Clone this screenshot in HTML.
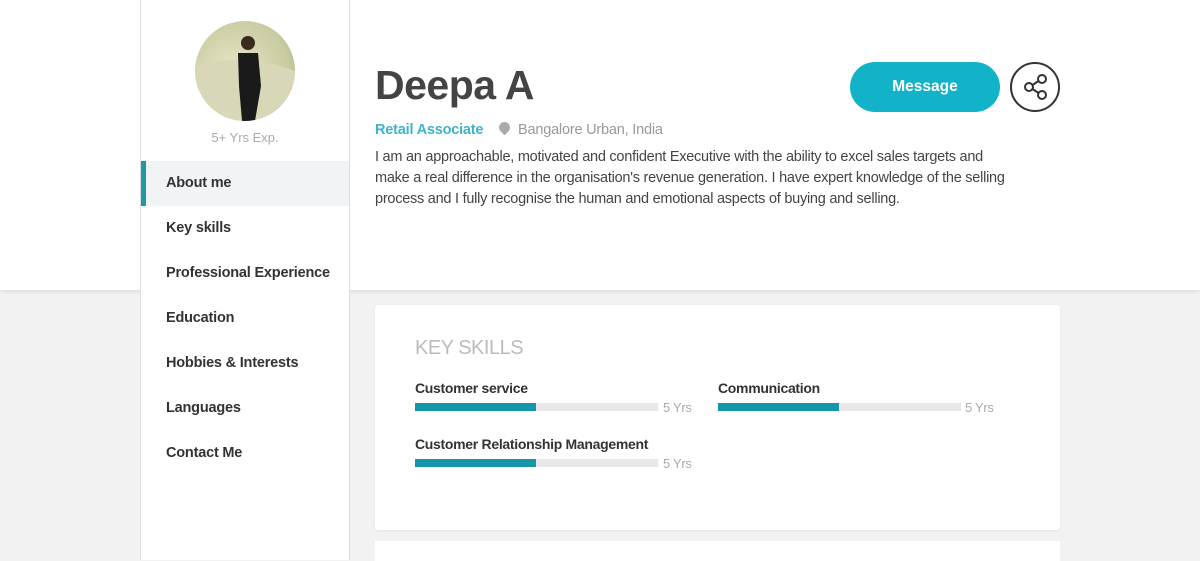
<!DOCTYPE html><html><head><style>
body{margin:0;width:1200px;height:550px;overflow:hidden;background:#f2f2f3;font-family:"Liberation Sans",sans-serif;position:relative}
.top{position:absolute;left:0;top:0;width:1200px;height:290px;background:#fff;box-shadow:0 2px 4px rgba(0,0,0,.08)}
.side{position:absolute;left:140px;top:0;width:208px;height:560px;background:#fff;border-left:1px solid #ddd;border-right:1px solid #ddd}
.av{position:absolute;left:54px;top:21px;width:100px;height:100px;border-radius:50%;overflow:hidden;background:radial-gradient(circle at 40% 50%,#e8e6c8,#c8caa0 70%,#9aa080)}
.exp{position:absolute;top:130px;width:100%;text-align:center;font-size:13px;color:#aaa}
.nav{position:absolute;top:161px;left:0;width:208px}
.nav div{height:45px;line-height:45px;padding-left:25px;font-size:14.5px;font-weight:bold;color:#333;letter-spacing:-0.2px}
.nav .a{background:#f2f3f5;border-left:5px solid #1c9aa7;padding-left:20px}
h1{position:absolute;left:375px;top:62px;margin:0;font-size:41px;color:#444;font-weight:bold;letter-spacing:-0.5px}
.role{position:absolute;left:375px;top:122px;font-size:14.5px;color:#3fb3c8;font-weight:bold;letter-spacing:-0.2px}
.loc{position:absolute;left:518px;top:122px;font-size:14.5px;color:#999;letter-spacing:-0.2px}
.pin{position:absolute;left:499px;top:122px;width:11px;height:11px;border-radius:50% 50% 50% 0;transform:rotate(-45deg);background:#aaa}
.desc{position:absolute;left:375px;top:147px;width:680px;font-size:14.5px;line-height:21px;color:#444;letter-spacing:-0.25px}
.btn{position:absolute;left:850px;top:62px;width:150px;height:50px;border-radius:25px;background:#12b2c8;color:#fff;font-weight:bold;font-size:15.5px;text-align:center;line-height:50px}
.sh{position:absolute;left:1010px;top:62px;width:46px;height:46px;border:2px solid #333;border-radius:50%}
.card{position:absolute;left:375px;top:305px;width:685px;height:225px;background:#fff;border-radius:3px;box-shadow:0 1px 3px rgba(0,0,0,.06)}
.card2{position:absolute;left:375px;top:541px;width:685px;height:20px;background:#fff}
.kt{position:absolute;left:40px;top:32px;font-size:20px;color:#bbb;letter-spacing:-0.5px}
.sk{position:absolute;font-size:14px;font-weight:bold;color:#333;letter-spacing:-0.3px}
.bar{position:absolute;width:243px;height:8px;background:#e8e8ea}
.bar i{display:block;width:121px;height:8px;background:#1296a8}
.y{position:absolute;font-size:13px;color:#aaa;letter-spacing:-0.3px}
</style></head><body>
<div class="top"></div>
<div class="side"><div class="av"><svg width="100" height="100"><path d="M0 45 Q50 30 100 50 L100 100 L0 100Z" fill="#d8d8b8"/><circle cx="53" cy="22" r="7" fill="#3a2a20"/><path d="M43 32 L63 32 L66 65 L60 100 L47 100 L44 65Z" fill="#1a1a1a"/></svg></div><div class="exp">5+ Yrs Exp.</div>
<div class="nav"><div class="a">About me</div><div>Key skills</div><div>Professional Experience</div><div>Education</div><div>Hobbies &amp; Interests</div><div>Languages</div><div>Contact Me</div></div></div>
<h1>Deepa A</h1>
<div class="role">Retail Associate</div><div class="pin"></div><div class="loc">Bangalore Urban, India</div>
<div class="desc">I am an approachable, motivated and confident Executive with the ability to excel sales targets and<br>make a real difference in the organisation's revenue generation. I have expert knowledge of the selling<br>process and I fully recognise the human and emotional aspects of buying and selling.</div>
<div class="btn">Message</div>
<div class="sh"><svg width="46" height="46" viewBox="0 0 46 46" fill="none" stroke="#333" stroke-width="2"><circle cx="30" cy="15" r="4"/><circle cx="17" cy="23" r="4"/><circle cx="30" cy="31" r="4"/><path d="M20.5 21l6-4M20.5 25l6 4"/></svg></div>
<div class="card"><div class="kt">KEY SKILLS</div>
<div class="sk" style="left:40px;top:75px">Customer service</div><div class="bar" style="left:40px;top:98px"><i></i></div><div class="y" style="left:288px;top:95px">5 Yrs</div>
<div class="sk" style="left:343px;top:75px">Communication</div><div class="bar" style="left:343px;top:98px"><i></i></div><div class="y" style="left:590px;top:95px">5 Yrs</div>
<div class="sk" style="left:40px;top:131px">Customer Relationship Management</div><div class="bar" style="left:40px;top:154px"><i></i></div><div class="y" style="left:288px;top:151px">5 Yrs</div>
</div><div class="card2"></div>
</body></html>
